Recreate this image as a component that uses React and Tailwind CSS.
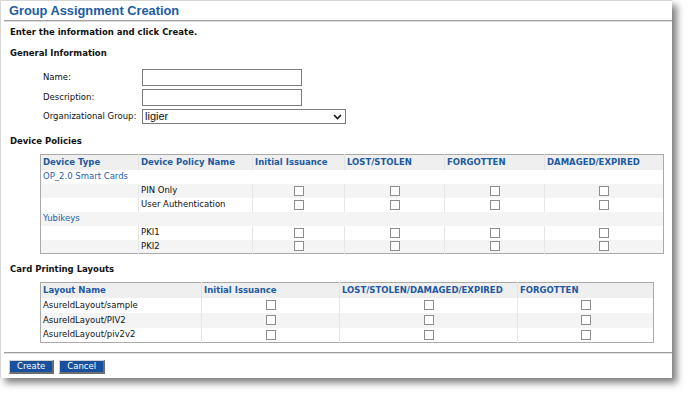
import React from 'react';

const verdana = { fontFamily: '"DejaVu Sans", Verdana, sans-serif' };

const Checkbox = () => (
  <span className="inline-block w-[10px] h-[10px] border border-[#8d8d8d] bg-white align-middle" />
);

const policyRows = [
  { type: 'OP_2.0 Smart Cards' },
  { name: 'PIN Only' },
  { name: 'User Authentication' },
  { type: 'Yubikeys' },
  { name: 'PKI1' },
  { name: 'PKI2' },
];

const layouts = ['AsureIdLayout/sample', 'AsureIdLayout/PIV2', 'AsureIdLayout/piv2v2'];

const th = 'text-left font-bold text-[#1c59a0] px-[2px] border-l border-[#e3e3e3] first:border-l-0';
const td = 'px-[2px] border-l border-[#e6e6e6] first:border-l-0';

export default function App() {
  return (
    <div className="w-[688px] h-[395px] bg-white overflow-hidden">
      <div
        className="w-[672px] h-[378px] bg-white border-t border-l border-[#d6d6d6] shadow-[5px_5px_7px_rgba(0,0,0,0.5)] text-[8.5px] text-[#111]"
        style={verdana}
      >
        <div
          className="h-[19px] pl-[8px] flex items-center font-bold text-[12.8px] text-[#1d5ba2]"
          style={{ fontFamily: '"Liberation Sans", Arial, sans-serif' }}
        >
          Group Assignment Creation
        </div>
        <div className="ml-[3px] h-[2px] border-t border-[#a2a2a2] border-b border-b-[#dcdcdc]" />

        <div className="mt-[3px] pl-[9px] leading-[14px] font-bold">Enter the information and click Create.</div>
        <div className="mt-[7px] pl-[9px] leading-[14px] font-bold">General Information</div>

        <div className="mt-[9px] pl-[42px] flex flex-col gap-[3px]">
          <div className="flex items-center h-[17px]">
            <span className="w-[99px]">Name:</span>
            <div className="w-[160px] h-[17px] border border-[#7c7c7c] bg-white" />
          </div>
          <div className="flex items-center h-[17px]">
            <span className="w-[99px]">Description:</span>
            <div className="w-[160px] h-[17px] border border-[#7c7c7c] bg-white" />
          </div>
          <div className="flex items-center h-[15px]">
            <span className="w-[99px]">Organizational Group:</span>
            <div
              className="w-[204px] h-[15px] border border-[#7c7c7c] bg-white flex items-center justify-between pl-[2px] pr-[3px] text-[11px]"
              style={{ fontFamily: '"Liberation Sans", Arial, sans-serif' }}
            >
              <span>ligier</span>
              <svg width="9" height="6" viewBox="0 0 9 6">
                <polyline points="1,1 4.5,4.5 8,1" fill="none" stroke="#111" strokeWidth="1.6" />
              </svg>
            </div>
          </div>
        </div>

        <div className="mt-[10px] pl-[9px] leading-[14px] font-bold">Device Policies</div>

        <table className="mt-[6px] ml-[39px] table-fixed border-collapse border border-[#aaaaaa] w-[623px]">
          <colgroup>
            <col className="w-[98px]" />
            <col className="w-[114px]" />
            <col className="w-[92px]" />
            <col className="w-[100px]" />
            <col className="w-[100px]" />
            <col className="w-[119px]" />
          </colgroup>
          <thead>
            <tr className="h-[15px] bg-[#efefef]">
              <th className={th}>Device Type</th>
              <th className={th}>Device Policy Name</th>
              <th className={th}>Initial Issuance</th>
              <th className={th}>LOST/STOLEN</th>
              <th className={th}>FORGOTTEN</th>
              <th className={th}>DAMAGED/EXPIRED</th>
            </tr>
          </thead>
          <tbody>
            {policyRows.map((r, i) => (
              <tr key={i} className={`h-[14px] ${i % 2 === 1 ? 'bg-[#f4f4f4]' : 'bg-white'}`}>
                {r.type ? (
                  <td className="px-[2px] text-[#1f5fa8]" colSpan={6}>{r.type}</td>
                ) : (
                  <>
                    <td className={td}></td>
                    <td className={td}>{r.name}</td>
                    <td className={`${td} text-center`}><Checkbox /></td>
                    <td className={`${td} text-center`}><Checkbox /></td>
                    <td className={`${td} text-center`}><Checkbox /></td>
                    <td className={`${td} text-center`}><Checkbox /></td>
                  </>
                )}
              </tr>
            ))}
          </tbody>
        </table>

        <div className="mt-[8px] pl-[9px] leading-[14px] font-bold">Card Printing Layouts</div>

        <table className="mt-[6px] ml-[39px] table-fixed border-collapse border border-[#aaaaaa] w-[613px]">
          <colgroup>
            <col className="w-[161px]" />
            <col className="w-[138px]" />
            <col className="w-[178px]" />
            <col className="w-[136px]" />
          </colgroup>
          <thead>
            <tr className="h-[15px] bg-[#efefef]">
              <th className={th}>Layout Name</th>
              <th className={th}>Initial Issuance</th>
              <th className={th}>LOST/STOLEN/DAMAGED/EXPIRED</th>
              <th className={th}>FORGOTTEN</th>
            </tr>
          </thead>
          <tbody>
            {layouts.map((l, i) => (
              <tr key={l} className={`h-[15px] ${i % 2 === 1 ? 'bg-[#f4f4f4]' : 'bg-white'}`}>
                <td className={td}>{l}</td>
                <td className={`${td} text-center`}><Checkbox /></td>
                <td className={`${td} text-center`}><Checkbox /></td>
                <td className={`${td} text-center`}><Checkbox /></td>
              </tr>
            ))}
          </tbody>
        </table>

        <div className="mt-[9px] ml-[3px] h-[2px] border-t border-[#9c9c9c] border-b border-b-[#e0e0e0]" />

        <div className="mt-[6px] pl-[8px] flex gap-[5px]">
          {['Create', 'Cancel'].map((b) => (
            <button
              key={b}
              className="h-[14px] px-[7px] bg-[#17519e] text-white text-[8.5px] leading-none border border-[#6e6e6e] border-t-[#d2d2d2] border-l-[#d2d2d2] border-r-2 border-b-2"
              style={verdana}
            >
              {b}
            </button>
          ))}
        </div>
      </div>
    </div>
  );
}
